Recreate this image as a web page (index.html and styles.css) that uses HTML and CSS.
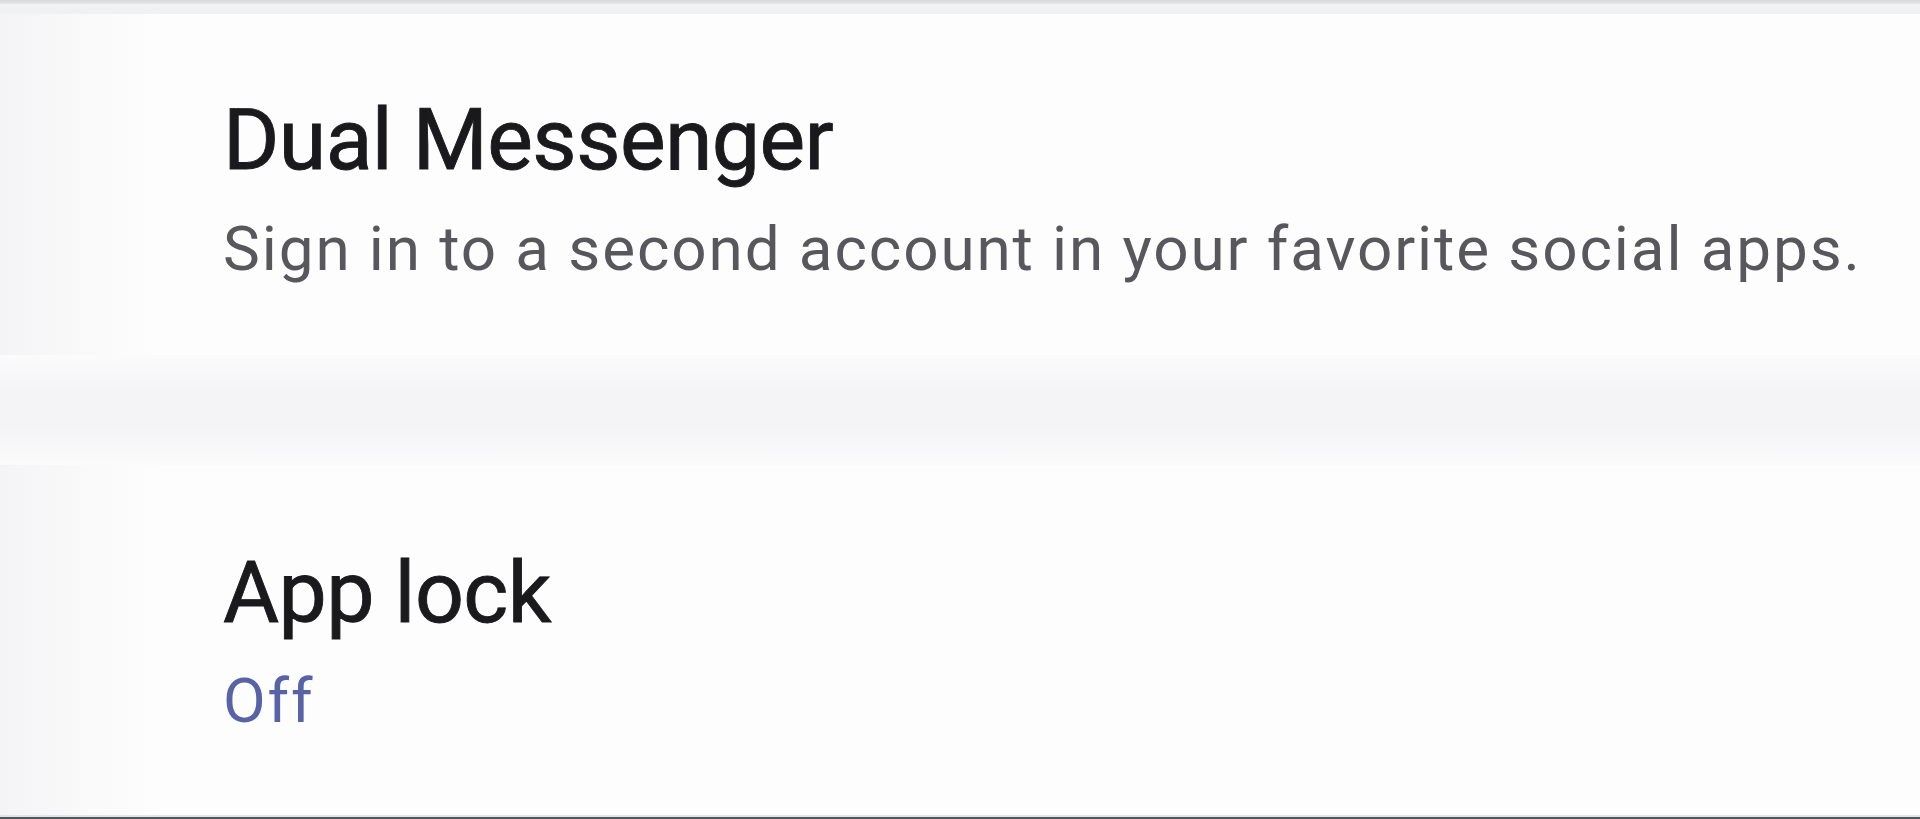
FILE: index.html
```html
<!DOCTYPE html>
<html lang="en">
<head>
  <meta charset="UTF-8">
  <title>Advanced features</title>
  <link rel="stylesheet" href="styles.css">
</head>
<body>

  <div class="top-edge"></div>

  <div class="card">
    <div class="item-title">Dual Messenger</div>
    <div class="item-sub">Sign in to a second account in your favorite social apps.</div>
  </div>

  <div class="gap"></div>

  <div class="card card-last">
    <div class="item-title">App lock</div>
    <div class="item-sub item-state">Off</div>
  </div>

  <div class="bottom-edge"></div>

</body>
</html>
```

FILE: styles.css
```css
body {
  font-family: Roboto, "Noto Sans", sans-serif;
  background-color: #f4f4f6;
  margin: 0;
  padding: 0;
  height: 819px;
  overflow: hidden;
  display: flex;
  flex-direction: column;
}

.top-edge {
  height: 4px;
  background: linear-gradient(#d6d8da, #e6e7e9);
  border-bottom: 10px solid #f1f1f3;
}

.card {
  background: linear-gradient(90deg, #f4f4f6 0, #f9f9fa 80px, #fdfdfe 160px);
  padding: 76px 0 66px 223px;
}

.card-last {
  flex: 1;
  padding-top: 78px;
  padding-bottom: 0;
}

/* soft grey band between the two cards */
.gap {
  height: 110px;
  background: linear-gradient(#fbfbfc, #f4f4f6 35%, #f4f4f6 65%, #fbfbfc);
}

.item-title {
  font-size: 86px;
  line-height: 100px;
  color: #1a1a1c;
  letter-spacing: -0.6px;
  -webkit-text-stroke: 0.9px #1a1a1c;
}

.item-sub {
  font-size: 62px;
  line-height: 80px;
  color: #58585c;
  letter-spacing: 1.9px;
  margin-top: 19px;
}

.item-state {
  color: #5763a6;
  margin-top: 18px;
}

.bottom-edge {
  height: 4px;
  background: linear-gradient(#e2e4e6 50%, #50565b 50%);
}
```
